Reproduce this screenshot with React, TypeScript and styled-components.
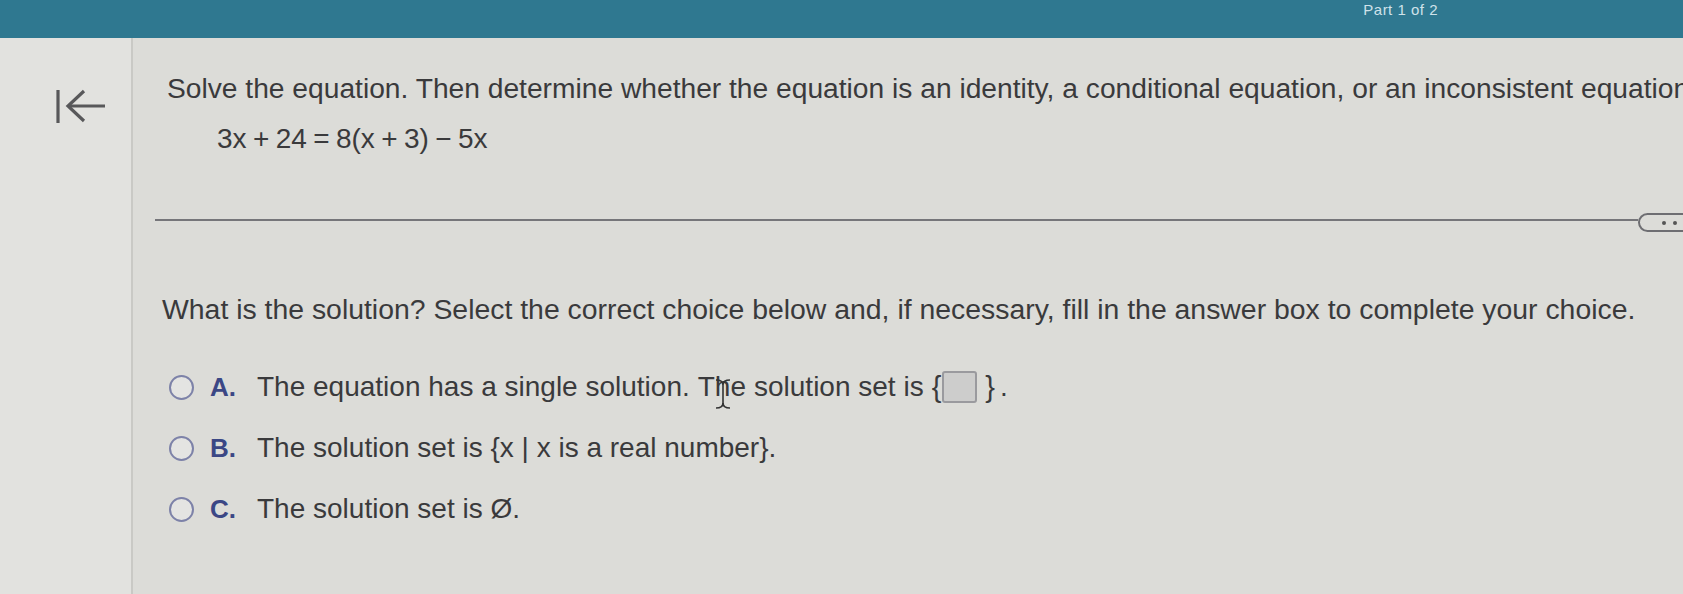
import React from "react";
import styled, { createGlobalStyle } from "styled-components";

const GlobalStyle = createGlobalStyle`
  html, body {
    margin: 0;
    padding: 0;
    background: #dcdcd8;
  }
  * {
    box-sizing: border-box;
  }
`;

const options = [
  { letter: "A", kind: "box" },
  { letter: "B", kind: "real" },
  { letter: "C", kind: "empty" },
];

const App = () => {
  return (
    <>
      <GlobalStyle />
      <Page>
        <TopBar>
          <PartText>Part 1 of 2</PartText>
        </TopBar>
        <Body>
          <Sidebar>
            <BackButton aria-label="back">
              <svg width="52" height="36" viewBox="0 0 52 36">
                <line x1="3" y1="1" x2="3" y2="34" stroke="#58585a" strokeWidth="3.2" />
                <line x1="13" y1="17" x2="50" y2="17" stroke="#58585a" strokeWidth="3.2" />
                <polyline points="29,2 13,17 29,32" fill="none" stroke="#58585a" strokeWidth="3.2" />
              </svg>
            </BackButton>
          </Sidebar>
          <Main>
            <Title>
              Solve the equation. Then determine whether the equation is an identity, a conditional equation, or an
              inconsistent equation.
            </Title>
            <Equation>3x + 24 = 8(x + 3) − 5x</Equation>
            <DividerRow>
              <DividerLine />
              <MorePill>
                <Dot />
                <Dot />
              </MorePill>
            </DividerRow>
            <Question>
              What is the solution? Select the correct choice below and, if necessary, fill in the answer box to
              complete your choice.
            </Question>
            <Choices>
              {options.map((o) => (
                <Choice key={o.letter}>
                  <Radio />
                  <Letter>{o.letter}.</Letter>
                  {o.kind === "box" && (
                    <ChoiceText>
                      The equation has a single solution.{" "}
                      <CursorWord>
                        The
                        <IBeam width="20" height="32" viewBox="0 0 20 32">
                          <path d="M3 2 Q10 2 10 7 Q10 2 17 2" fill="none" stroke="#333" strokeWidth="1.6" />
                          <line x1="10" y1="7" x2="10" y2="26" stroke="#333" strokeWidth="1.6" />
                          <path d="M3 30 Q10 30 10 25 Q10 30 17 30" fill="none" stroke="#333" strokeWidth="1.6" />
                        </IBeam>
                      </CursorWord>{" "}
                      solution set is <Brace>{"{"}</Brace>
                      <AnswerBox />
                      <Brace>{"}"}</Brace>
                      <Period>.</Period>
                    </ChoiceText>
                  )}
                  {o.kind === "real" && <ChoiceText>The solution set is {"{"}x | x is a real number{"}"}.</ChoiceText>}
                  {o.kind === "empty" && <ChoiceText>The solution set is Ø.</ChoiceText>}
                </Choice>
              ))}
            </Choices>
          </Main>
        </Body>
      </Page>
    </>
  );
};

export default App;

const Page = styled.div`
  width: 1683px;
  height: 594px;
  overflow: hidden;
  display: flex;
  flex-direction: column;
  font-family: "Liberation Sans", Arial, sans-serif;
  color: #3a3a3c;
  background: #dcdcd8;
`;

const TopBar = styled.div`
  height: 38px;
  flex: none;
  background: #2f7890;
  display: flex;
  justify-content: flex-end;
  align-items: flex-start;
  padding-right: 245px;
  overflow: hidden;
`;

const PartText = styled.div`
  color: #cfe2ea;
  font-size: 15px;
  line-height: 17px;
  margin-top: 1px;
  letter-spacing: 0.5px;
`;

const Body = styled.div`
  flex: 1;
  display: flex;
`;

const Sidebar = styled.div`
  width: 133px;
  flex: none;
  background: #e2e2df;
  border-right: 2px solid #c9c9c5;
  padding: 51px 0 0 55px;
`;

const BackButton = styled.div`
  width: 52px;
  height: 36px;
`;

const Main = styled.div`
  flex: 1;
  min-width: 0;
  display: flex;
  flex-direction: column;
  padding: 34px 0 0 34px;
`;

const Title = styled.div`
  font-size: 28.2px;
  line-height: 32px;
  white-space: nowrap;
`;

const Equation = styled.div`
  margin: 20px 0 0 50px;
  font-size: 28px;
  line-height: 30px;
  word-spacing: -1.4px;
`;

const DividerRow = styled.div`
  margin: 53px 0 0 -12px;
  display: flex;
  align-items: center;
`;

const DividerLine = styled.div`
  flex: 1;
  height: 2px;
  background: #76767a;
`;

const MorePill = styled.div`
  width: 62px;
  height: 19px;
  flex: none;
  border: 2px solid #6e6e72;
  border-radius: 10px;
  display: flex;
  align-items: center;
  justify-content: center;
  gap: 7px;
  margin-right: -17px;
  margin-top: 6px;
`;

const Dot = styled.span`
  width: 4px;
  height: 4px;
  border-radius: 50%;
  background: #555;
`;

const Question = styled.div`
  margin: 61px 0 0 -5px;
  font-size: 28.4px;
  line-height: 32px;
  white-space: nowrap;
`;

const Choices = styled.div`
  margin-top: 45px;
  display: flex;
  flex-direction: column;
  gap: 27px;
`;

const Choice = styled.div`
  display: flex;
  align-items: center;
  height: 34px;
`;

const Radio = styled.span`
  width: 25px;
  height: 25px;
  flex: none;
  border-radius: 50%;
  border: 2.5px solid #7d82a8;
  background: #e4e4e2;
  margin-left: 2px;
`;

const Letter = styled.span`
  width: 63px;
  padding-left: 16px;
  font-size: 26px;
  font-weight: bold;
  color: #3b4785;
`;

const ChoiceText = styled.span`
  font-size: 28px;
  line-height: 34px;
  white-space: nowrap;
  display: flex;
  align-items: center;
`;

const CursorWord = styled.span`
  position: relative;
  margin: 0 8px;
`;

const IBeam = styled.svg`
  position: absolute;
  left: 15px;
  top: 8px;
`;

const Brace = styled.span`
  font-size: 29px;
  margin: 0 1px 0 8px;
  &:last-of-type {
    margin: 0 1px;
  }
`;

const Period = styled.span`
  margin-left: 4px;
`;

const AnswerBox = styled.span`
  width: 35px;
  height: 32px;
  border: 2px solid #9a9a9e;
  border-radius: 3px;
  background: #cdcdcc;
`;
